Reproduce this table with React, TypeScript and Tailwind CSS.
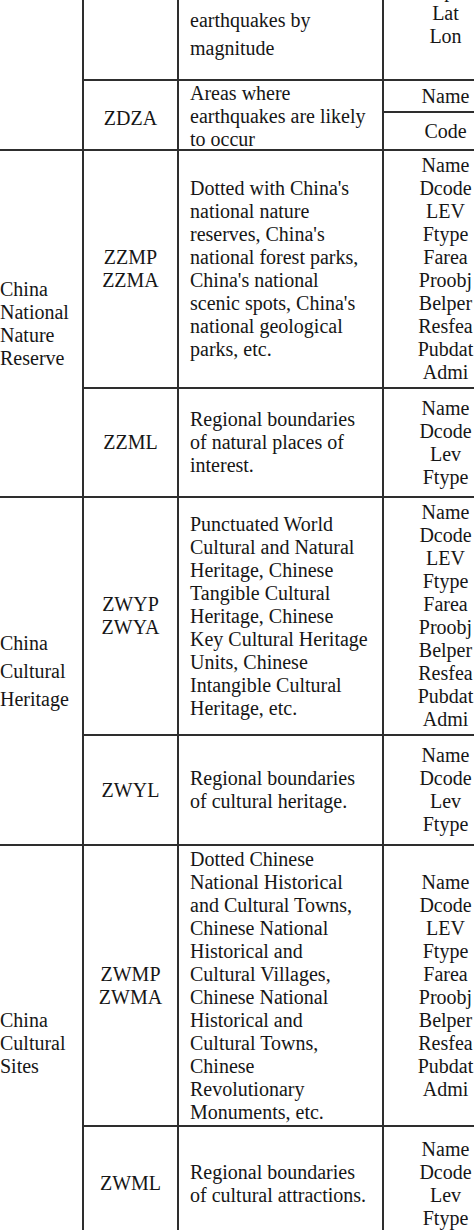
import React from "react"

const rule = "border-[#2e2e2e]"

type Row = {
  h: string
  code?: string[]
  desc: string[]
  fields: string[]
}

function Lines({ items }: { items: string[] }) {
  return (
    <>
      {items.map((t, i) => (
        <span key={i} className="block whitespace-nowrap">
          {t}
        </span>
      ))}
    </>
  )
}

const attrsLong = [
  "Name",
  "Dcode",
  "LEV",
  "Ftype",
  "Farea",
  "Proobj",
  "Belper",
  "Resfea",
  "Pubdat",
  "Admi",
]
const attrsShort = ["Name", "Dcode", "Lev", "Ftype"]

function DataRow({ row, first }: { row: Row; first: boolean }) {
  return (
    <div className={`flex ${row.h} ${first ? "" : `border-t-2 ${rule}`}`}>
      <div className="w-[93px] shrink-0 flex flex-col items-center justify-center text-center leading-[23px]">
        {row.code && <Lines items={row.code} />}
      </div>
      <div
        className={`w-[205px] shrink-0 border-l-2 ${rule} pl-[11px] flex flex-col justify-center leading-[23px]`}
      >
        <Lines items={row.desc} />
      </div>
      <div
        className={`flex-1 border-l-2 ${rule} flex flex-col items-center justify-center leading-[23px]`}
      >
        <Lines items={row.fields} />
      </div>
    </div>
  )
}

function Section({
  label,
  leading,
  rows,
}: {
  label: string[]
  leading: string
  rows: Row[]
}) {
  return (
    <div className={`flex border-t-2 ${rule}`}>
      <div className={`w-[82px] shrink-0 flex flex-col justify-center ${leading}`}>
        <Lines items={label} />
      </div>
      <div className={`flex-1 flex flex-col border-l-2 ${rule}`}>
        {rows.map((r, i) => (
          <DataRow key={i} row={r} first={i === 0} />
        ))}
      </div>
    </div>
  )
}

export default function App() {
  return (
    <div className="w-[474px] h-[1230px] overflow-hidden bg-white text-[#161616] text-[20px] font-['Liberation_Serif','Times_New_Roman',serif]">
      <div className="w-[507px]">
        {/* earthquake section, cut off at the top */}
        <div className="flex">
          <div className="w-[82px] shrink-0" />
          <div className={`flex-1 flex flex-col border-l-2 ${rule}`}>
            <div className="flex h-[79px]">
              <div className="w-[93px] shrink-0" />
              <div
                className={`w-[205px] shrink-0 border-l-2 ${rule} pl-[11px] pt-[6px] leading-[28px]`}
              >
                <Lines items={["earthquakes by", "magnitude"]} />
              </div>
              <div
                className={`flex-1 border-l-2 ${rule} overflow-hidden flex flex-col items-center leading-[23px]`}
              >
                <div className="-mt-[21px] text-center">
                  <Lines items={["Depth", "Lat", "Lon"]} />
                </div>
              </div>
            </div>
            <div className={`flex h-[70px] border-t-2 ${rule}`}>
              <div className="w-[93px] shrink-0 flex items-center justify-center pt-[5px]">
                ZDZA
              </div>
              <div
                className={`w-[205px] shrink-0 border-l-2 ${rule} pl-[11px] flex flex-col justify-center leading-[23px] pt-[3px]`}
              >
                <Lines items={["Areas where", "earthquakes are likely", "to occur"]} />
              </div>
              <div className={`flex-1 border-l-2 ${rule} flex flex-col`}>
                <div className="h-[30px] flex items-center justify-center">Name</div>
                <div
                  className={`flex-1 border-t-2 ${rule} flex items-center justify-center`}
                >
                  Code
                </div>
              </div>
            </div>
          </div>
        </div>

        <Section
          label={["China", "National", "Nature", "Reserve"]}
          leading="leading-[23px]"
          rows={[
            {
              h: "h-[236px]",
              code: ["ZZMP", "ZZMA"],
              desc: [
                "Dotted with China's",
                "national nature",
                "reserves, China's",
                "national forest parks,",
                "China's national",
                "scenic spots, China's",
                "national geological",
                "parks, etc.",
              ],
              fields: attrsLong,
            },
            {
              h: "h-[109px]",
              code: ["ZZML"],
              desc: ["Regional boundaries", "of natural places of", "interest."],
              fields: attrsShort,
            },
          ]}
        />

        <Section
          label={["China", "Cultural", "Heritage"]}
          leading="leading-[28px]"
          rows={[
            {
              h: "h-[236px]",
              code: ["ZWYP", "ZWYA"],
              desc: [
                "Punctuated World",
                "Cultural and Natural",
                "Heritage, Chinese",
                "Tangible Cultural",
                "Heritage, Chinese",
                "Key Cultural Heritage",
                "Units, Chinese",
                "Intangible Cultural",
                "Heritage, etc.",
              ],
              fields: attrsLong,
            },
            {
              h: "h-[110px]",
              code: ["ZWYL"],
              desc: ["Regional boundaries", "of cultural heritage."],
              fields: attrsShort,
            },
          ]}
        />

        <Section
          label={["China", "Cultural", "Sites"]}
          leading="leading-[23px]"
          rows={[
            {
              h: "h-[279px]",
              code: ["ZWMP", "ZWMA"],
              desc: [
                "Dotted Chinese",
                "National Historical",
                "and Cultural Towns,",
                "Chinese National",
                "Historical and",
                "Cultural Villages,",
                "Chinese National",
                "Historical and",
                "Cultural Towns,",
                "Chinese",
                "Revolutionary",
                "Monuments, etc.",
              ],
              fields: attrsLong,
            },
            {
              h: "h-[115px]",
              code: ["ZWML"],
              desc: ["Regional boundaries", "of cultural attractions."],
              fields: attrsShort,
            },
          ]}
        />
      </div>
    </div>
  )
}
